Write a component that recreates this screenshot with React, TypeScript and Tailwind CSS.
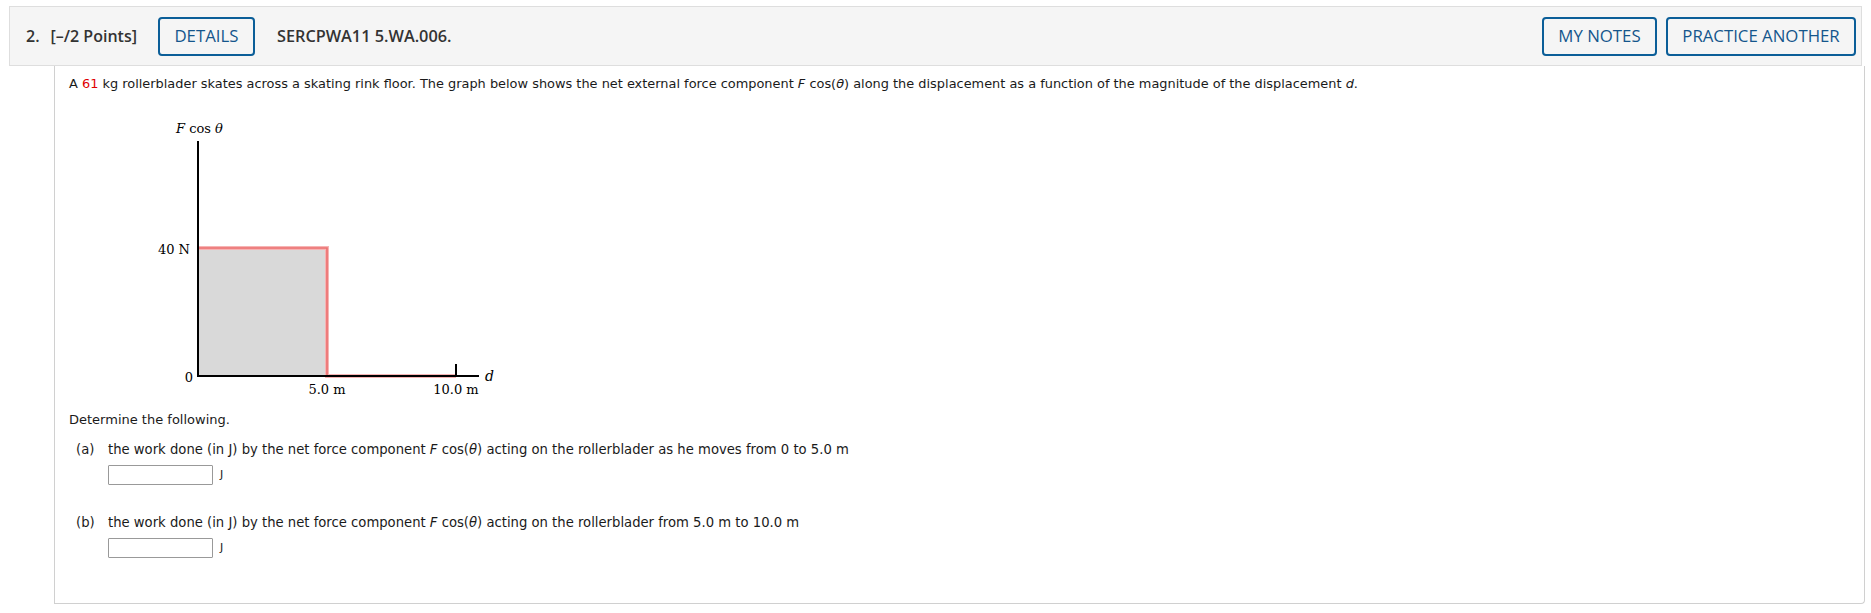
import React from "react";

const headerFont = { fontFamily: '"Open Sans", "Liberation Sans", sans-serif' };
const bodyFont = { fontFamily: '"DejaVu Sans", Verdana, sans-serif' };
const serif = '"DejaVu Serif", "Liberation Serif", serif';

function OutlineButton({ children, width }: { children: React.ReactNode; width: string }) {
  return (
    <button
      className={`h-[39px] ${width} rounded-[4px] border-2 border-[#0b5e98] bg-[#f5f5f5] text-[16.8px] text-[#14568c] flex items-center justify-center`}
    >
      {children}
    </button>
  );
}

function ForceGraph() {
  return (
    <svg width="360" height="290" viewBox="0 0 360 290" className="block">
      <rect x="58" y="137" width="129" height="128" fill="#d9d9d9" />
      <path d="M58 137 H187 V265 H316" fill="none" stroke="#f6b4b4" strokeWidth="4" />
      <path d="M58 137 H187 V265 H316" fill="none" stroke="#ec6f6f" strokeWidth="1.6" />
      <path d="M58 30 V265 H339" fill="none" stroke="#000" strokeWidth="2" />
      <path d="M316 253 V265" fill="none" stroke="#000" strokeWidth="2" />
      <text x="36" y="22" fontFamily={serif} fontSize="13" fill="#000">
        <tspan fontStyle="italic">F</tspan> cos <tspan fontStyle="italic">θ</tspan>
      </text>
      <text x="50" y="143" fontFamily={serif} fontSize="13" textAnchor="end" fill="#000">
        40 N
      </text>
      <text x="49" y="271" fontFamily={serif} fontSize="13" textAnchor="middle" fill="#000">
        0
      </text>
      <text x="187" y="283" fontFamily={serif} fontSize="13" textAnchor="middle" fill="#000">
        5.0 m
      </text>
      <text x="316" y="283" fontFamily={serif} fontSize="13" textAnchor="middle" fill="#000">
        10.0 m
      </text>
      <text x="345" y="270" fontFamily={serif} fontSize="14" fontStyle="italic" fill="#000">
        d
      </text>
    </svg>
  );
}

function AnswerRow({ label, text }: { label: string; text: React.ReactNode }) {
  return (
    <div>
      <div className="flex leading-[16px] text-[13.2px]">
        <span className="w-[32px] shrink-0">{label}</span>
        <span>{text}</span>
      </div>
      <div className="ml-[32px] mt-[7px] flex items-center gap-[7px]">
        <input type="text" className="w-[105px] h-[20px] border border-[#999] rounded-[1px] bg-white" />
        <span className="text-[11px]">J</span>
      </div>
    </div>
  );
}

const Fcos = () => (
  <>
    <i>F</i> cos(<i>θ</i>)
  </>
);

export default function App() {
  return (
    <div className="w-[1871px] h-[613px] bg-white pt-[6px] text-[#222]">
      <div
        className="ml-[9px] w-[1853px] h-[60px] bg-[#f5f5f5] border border-[#dedede] flex items-center pl-[16px] pr-[5px]"
        style={headerFont}
      >
        <span className="text-[16px] font-semibold text-[#333]">2.</span>
        <span className="ml-[11px] text-[16px] font-semibold text-[#333]">[–/2 Points]</span>
        <div className="ml-[21px]">
          <OutlineButton width="w-[97px]">DETAILS</OutlineButton>
        </div>
        <span className="ml-[22px] text-[16.3px] font-semibold text-[#333]">SERCPWA11 5.WA.006.</span>
        <div className="ml-auto flex gap-[9px]">
          <OutlineButton width="w-[115px]">MY NOTES</OutlineButton>
          <OutlineButton width="w-[190px]">PRACTICE ANOTHER</OutlineButton>
        </div>
      </div>

      <div
        className="ml-[54px] w-[1811px] h-[538px] border-l border-r border-b border-[#d0d0d0] rounded-br-[4px] pl-[14px] pt-[10px] text-[13px] text-[#1a1a1a]"
        style={bodyFont}
      >
        <p className="leading-[16px] text-[12.92px]">
          A <span className="text-[#e00000]">61</span> kg rollerblader skates across a skating rink floor. The graph
          below shows the net external force component <Fcos /> along the displacement as a function of the
          magnitude of the displacement <i>d</i>.
        </p>

        <div className="mt-[19px] ml-[71px]">
          <ForceGraph />
        </div>

        <p className="mt-[11px] leading-[16px]">Determine the following.</p>

        <div className="mt-[14px] ml-[7px] flex flex-col gap-[30px]">
          <AnswerRow
            label="(a)"
            text={
              <>
                the work done (in J) by the net force component <Fcos /> acting on the rollerblader as he moves from 0
                to 5.0 m
              </>
            }
          />
          <AnswerRow
            label="(b)"
            text={
              <>
                the work done (in J) by the net force component <Fcos /> acting on the rollerblader from 5.0 m to
                10.0 m
              </>
            }
          />
        </div>
      </div>
    </div>
  );
}
